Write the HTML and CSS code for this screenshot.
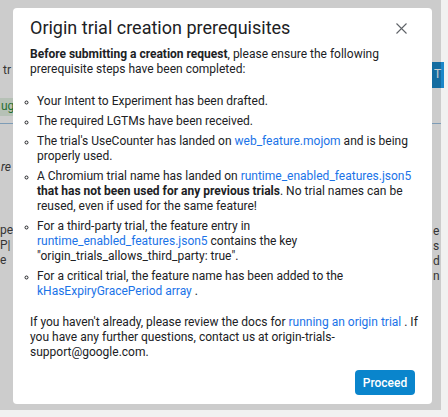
FILE: index.html
```html
<!DOCTYPE html>
<html lang="en">
<head>
    <meta charset="UTF-8">
    <meta name="viewport" content="width=device-width, initial-scale=1.0">
    <title>Origin trial creation prerequisites</title>
    <link rel="stylesheet" href="styles.css">
</head>
<body>
    <div class="page">
        <div class="page-bit bit-tr">tr</div>
        <div class="page-bit bit-ug">ug</div>
        <div class="page-bit bit-btn">T</div>
        <div class="page-line line-left"></div>
        <div class="page-line line-right"></div>
        <div class="page-bit bit-re">re</div>
        <div class="page-bit bit-left">pe<br>P|<br>e</div>
        <div class="page-bit bit-right">e s<br>d<br>n</div>
    </div>

    <div class="overlay"></div>

    <div class="dialog">
        <div class="dialog-header">
            <h2>Origin trial creation prerequisites</h2>
            <button class="close" aria-label="Close">
                <svg width="11" height="11" viewBox="0 0 11 11">
                    <path d="M0.5 0.5 L10.5 10.5 M10.5 0.5 L0.5 10.5" stroke="#5f6368" stroke-width="1.1" fill="none"/>
                </svg>
            </button>
        </div>

        <p><strong>Before submitting a creation request</strong>, please ensure the following prerequisite steps have been completed:</p>

        <ul class="steps">
            <li>Your Intent to Experiment has been drafted.</li>
            <li>The required LGTMs have been received.</li>
            <li>The trial's UseCounter has landed on <a href="#">web_feature.mojom</a> and is being properly used.</li>
            <li>A Chromium trial name has landed on <a href="#">runtime_enabled_features.json5</a> <strong>that has not been used for any previous trials</strong>. No trial names can be reused, even if used for the same feature!</li>
            <li>For a third-party trial, the feature entry in <a href="#">runtime_enabled_features.json5</a> contains the key "origin_trials_allows_third_party: true".</li>
            <li>For a critical trial, the feature name has been added to the <a href="#">kHasExpiryGracePeriod array</a> .</li>
        </ul>

        <p>If you haven't already, please review the docs for <a href="#">running an origin trial</a> . If you have any further questions, contact us at origin-trials-support@google.com.</p>

        <div class="actions">
            <button class="proceed">Proceed</button>
        </div>
    </div>
</body>
</html>
```

FILE: styles.css
```css
* {
    margin: 0;
    padding: 0;
    box-sizing: border-box;
}
body {
    width: 448px;
    height: 417px;
    overflow: hidden;
    position: relative;
    background: #f1f1f1;
    font-family: Roboto, "Noto Sans", Arial, sans-serif;
    color: #202124;
}
.page {
    position: absolute;
    left: 0;
    top: 0;
    width: 441px;
    height: 410px;
    background: #fff;
    font-size: 12px;
    color: #444;
}
.page-bit {
    position: absolute;
    line-height: 15px;
}
.bit-tr { left: 3px; top: 63px; }
.bit-ug {
    left: 0;
    top: 98px;
    width: 13px;
    height: 18px;
    padding: 1px 0 0 1px;
    background: #e4f2e4;
    color: #2e8b3e;
}
.bit-btn {
    left: 432px;
    top: 62px;
    width: 12px;
    height: 26px;
    padding: 5px 0 0 2px;
    background: #1a87c9;
    color: #fff;
}
.bit-re { left: 1px; top: 160px; font-style: italic; }
.bit-left { left: 0; top: 223px; }
.bit-right { left: 433px; top: 224px; }
.page-line {
    position: absolute;
    height: 1px;
    background: #9dc4e4;
    top: 123px;
}
.line-left { left: 0; width: 13px; }
.line-right { left: 432px; width: 9px; }
.overlay {
    position: absolute;
    left: 0;
    top: 0;
    width: 441px;
    height: 410px;
    background: rgba(0, 0, 0, 0.2);
}
.dialog {
    position: absolute;
    left: 13px;
    top: 8px;
    width: 419px;
    height: 396px;
    background: #fff;
    border-radius: 4px;
    padding: 9px 12px 0 17px;
    font-size: 12px;
    line-height: 15px;
    display: flex;
    flex-direction: column;
}
.dialog-header {
    display: flex;
    align-items: center;
    justify-content: space-between;
    margin-bottom: 8px;
}
.dialog-header h2 {
    font-size: 18px;
    font-weight: 400;
    line-height: 22px;
    color: #202124;
}
.close {
    background: none;
    border: none;
    width: 11px;
    height: 11px;
    margin-right: 13px;
    cursor: pointer;
    display: flex;
}
.dialog strong {
    font-weight: 700;
}
.steps {
    list-style: circle;
    margin: 17px 0 11px 0;
    padding-left: 7px;
}
.steps li {
    margin-bottom: 5px;
}
.steps li::marker {
    font-size: 9px;
}
a {
    color: #1a73e8;
    text-decoration: none;
}
.actions {
    margin-top: auto;
    display: flex;
    justify-content: flex-end;
    padding: 0 5px 9px 0;
}
.proceed {
    background: #0a85cc;
    color: #fff;
    border: none;
    border-radius: 4px;
    font-family: Roboto, Arial, sans-serif;
    font-size: 12px;
    font-weight: 500;
    width: 60px;
    height: 25px;
    cursor: pointer;
}
```
